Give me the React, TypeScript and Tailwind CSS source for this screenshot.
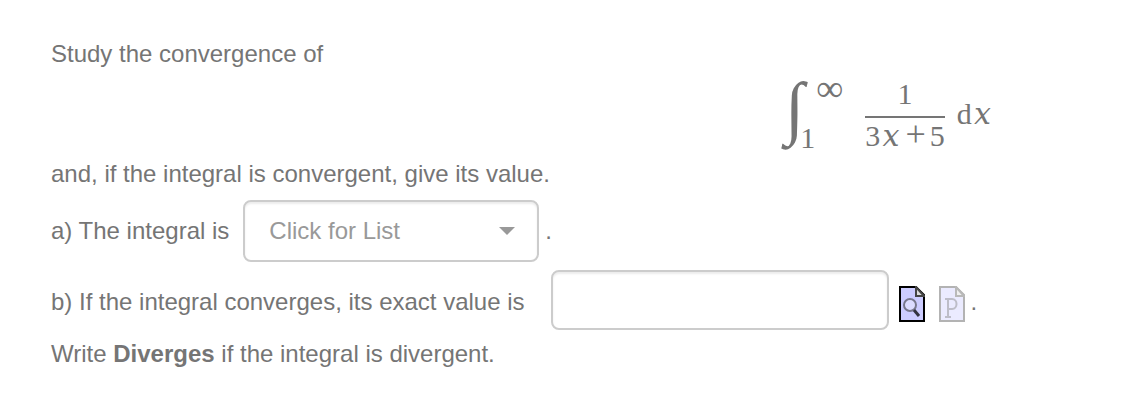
function Variable() {
  return <i className="font-['DejaVu_Math_TeX_Gyre',serif] text-[30px] leading-none not-italic">𝑥</i>;
}

function Formula() {
  return (
    <div
      role="math"
      aria-label="Integral from 1 to infinity of 1 over 3x + 5, dx"
      className="flex h-[84px] items-center justify-end pr-[100px] font-['Liberation_Serif',serif] text-[30px] leading-none"
    >
      <i className="pb-3 text-[70px] leading-[80px]">∫</i>
      <span className="-ml-1 flex h-[72px] flex-col justify-between">
        <span className="pl-4 text-[38px] leading-5">∞</span>
        <span className="leading-6">1</span>
      </span>
      <span className="ml-[22px] flex flex-col items-center">
        <span className="pb-1 leading-9">1</span>
        <span className="flex items-baseline gap-1 border-t-2 border-[#757575] leading-8">
          <span>
            3<Variable />
          </span>
          <span className="text-[36px] leading-8">+</span>
          <span>5</span>
        </span>
      </span>
      <span className="ml-3">
        d<Variable />
      </span>
    </div>
  );
}

function PreviewIcon() {
  return (
    <svg viewBox="0 0 26 36" className="h-9 w-[26px]" fill="none" aria-hidden="true">
      <path d="M1 1H17L25 9V35H1Z" fill="#ccccff" stroke="#000" strokeWidth="2" />
      <path d="M17 1V10H25Z" fill="#ddd" stroke="#444" strokeWidth="2" />
      <circle cx="11" cy="19" r="6" fill="#dcdcff" stroke="#77778c" strokeWidth="2" />
      <path d="M15 24L20 30" stroke="#333340" strokeWidth="3" />
    </svg>
  );
}

function PlotIcon() {
  return (
    <svg viewBox="0 0 26 36" className="h-9 w-[26px]" fill="none" aria-hidden="true">
      <path d="M1 1H17L25 9V35H1Z" fill="#ebebff" stroke="#b3b3b3" strokeWidth="2" />
      <path d="M17 1V10H25Z" fill="#f0f0f0" stroke="#b9b9b9" strokeWidth="2" />
      <path d="M6 13H13C19 13 19 23 13 23H10M9 13V31M6 31H12" stroke="#bdbdc8" strokeWidth="2" />
    </svg>
  );
}

export default function App() {
  return (
    <main className="bg-white px-[51px] py-9 font-['Liberation_Sans',Arial,sans-serif] text-2xl leading-9 text-[#757575]">
      <p>Study the convergence of</p>
      <Formula />
      <p>and, if the integral is convergent, give its value.</p>

      <div className="mt-2 flex items-center">
        <label htmlFor="kind">a) The integral is</label>
        <div className="relative mr-[6px] ml-[14px]">
          <select
            id="kind"
            defaultValue=""
            className="h-[62px] w-[296px] appearance-none rounded-lg border-2 border-[#ccc] bg-white px-6 text-[#999] shadow-[inset_0_2px_2px_#00000013]"
          >
            <option value="">Click for List</option>
            <option value="convergent">convergent</option>
            <option value="divergent">divergent</option>
          </select>
          <svg viewBox="0 0 16 8" className="pointer-events-none absolute top-[27px] right-6 h-2 w-4" aria-hidden="true">
            <path d="M0 0H16L8 8Z" fill="#999" />
          </svg>
        </div>
        <span>.</span>
      </div>

      <div className="mt-2 flex items-center">
        <label htmlFor="value" className="pt-1">
          b) If the integral converges, its exact value is
        </label>
        <input
          id="value"
          type="text"
          className="mr-[10px] ml-[26px] h-[60px] w-[338px] rounded-lg border-2 border-[#ccc] bg-white px-4 shadow-[inset_0_2px_2px_#00000013]"
        />
        <div className="mt-2 flex gap-[14px]">
          <button type="button" aria-label="Preview">
            <PreviewIcon />
          </button>
          <button type="button" aria-label="Plot">
            <PlotIcon />
          </button>
        </div>
        <span className="ml-[6px] pt-1">.</span>
      </div>

      <p className="mt-[6px]">
        Write <strong>Diverges</strong> if the integral is divergent.
      </p>
    </main>
  );
}
